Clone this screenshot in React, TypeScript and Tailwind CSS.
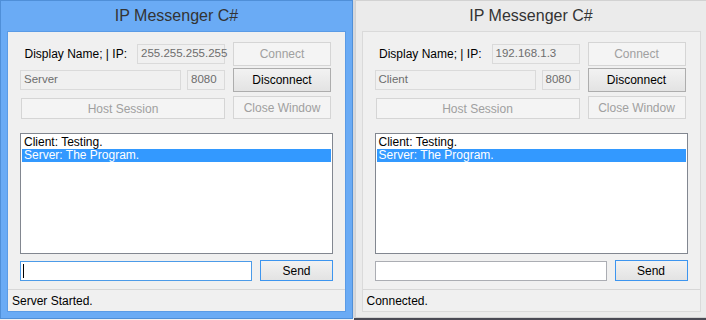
import React from 'react'

// Two WinForms "IP Messenger C#" windows side by side: the host (active) and the client (inactive).

type Props = {
  active?: boolean
  ip: string
  name: string
  status: string
}

const ui = { fontFamily: '"Liberation Sans", Arial, sans-serif' }

function DisabledButton({ label, className }: { label: string; className: string }) {
  return (
    <div
      className={`flex items-center justify-center border border-[#d5d5d5] bg-[#f4f4f4] text-[12px] text-[#a0a0a0] ${className}`}>
      {label}
    </div>
  )
}

function Button({ label, blue, className }: { label: string; blue?: boolean; className: string }) {
  return (
    <div
      className={`flex items-center justify-center border bg-gradient-to-b from-[#f2f2f2] to-[#e3e3e3] text-[12px] text-black ${
        blue ? 'border-[#3d95ef]' : 'border-[#adadad]'
      } ${className}`}>
      {label}
    </div>
  )
}

function ReadOnlyBox({ value, className }: { value: string; className: string }) {
  return (
    <div
      className={`flex items-center border border-[#dadada] bg-[#f0f0f0] px-[3px] text-[11.5px] text-[#6d6d6d] ${className}`}>
      {value}
    </div>
  )
}

function Client({ active, ip, name, status }: Props) {
  return (
    <div className="flex h-[279px] w-[337px] flex-col bg-[#f0f0f0]" style={ui}>
      {/* connection controls */}
      <div className="ml-[12px] mt-[10px] flex h-[24px] w-[311px] items-center justify-between">
        <div className="flex w-[205px] items-center justify-end">
          <span className="text-[12px] text-black">Display Name; | IP:</span>
          <ReadOnlyBox value={ip} className="ml-[10px] h-[20px] w-[88px]" />
        </div>
        <DisabledButton label="Connect" className="h-[24px] w-[98px]" />
      </div>
      <div className="ml-[12px] mt-[2px] flex h-[24px] w-[311px] items-center justify-between">
        <div className="flex w-[205px] items-center justify-between">
          <ReadOnlyBox value={name} className="h-[20px] w-[161px]" />
          <ReadOnlyBox value="8080" className="h-[20px] w-[38px]" />
        </div>
        <Button label="Disconnect" className="h-[24px] w-[98px]" />
      </div>
      <div className="ml-[12px] mt-[4px] flex h-[23px] w-[311px] items-center justify-between">
        <DisabledButton label="Host Session" className="ml-[1px] h-[21px] w-[204px] self-end" />
        <DisabledButton label="Close Window" className="h-[23px] w-[98px]" />
      </div>

      {/* chat log */}
      <div className="ml-[12px] mt-[14px] flex h-[121px] w-[313px] flex-col border border-[#828790] bg-white p-[1px] text-[12px]">
        <div className="h-[14px] px-[2px] leading-[14px] text-black">Client: Testing.</div>
        <div className="h-[13px] bg-[#3399ff] px-[2px] leading-[13px] text-white">Server: The Program.</div>
      </div>

      {/* message entry */}
      <div className="ml-[12px] mt-[6px] flex h-[21px] w-[313px] items-center justify-between">
        <div
          className={`flex h-[20px] w-[232px] items-center bg-white px-[2px] border ${
            active ? 'border-[#4c9be8]' : 'border-[#abadb3]'
          }`}>
          {active && <div className="h-[14px] w-px bg-black" />}
        </div>
        <Button label="Send" blue className="h-[21px] w-[73px]" />
      </div>

      {/* status strip */}
      <div className="mt-[8px] h-px w-full bg-[#d7d7d7]" />
      <div className="flex flex-1 items-center pl-[4px] text-[12px] text-black">{status}</div>
    </div>
  )
}

function Window({ active, ...rest }: Props) {
  return (
    <div
      className={`flex h-full w-full flex-col items-center border ${
        active ? 'border-[#4f8fd8] bg-[#6aabf5]' : 'border-[#d2d2d2] bg-[#ebebeb]'
      }`}>
      <div className="flex h-[30px] w-full items-center justify-center text-[16px] text-[#333]" style={ui}>
        IP Messenger C#
      </div>
      <div className={`border ${active ? 'border-[#5a9be6]' : 'border-[#dadada]'}`}>
        <Client active={active} {...rest} />
      </div>
    </div>
  )
}

export default function App() {
  return (
    <div className="relative h-[320px] w-[706px] overflow-hidden bg-[#f2f2f2]">
      <div className="absolute bottom-0 left-[354px] h-[2px] w-[352px] bg-[#4a4a54]" />
      <div className="absolute left-[352px] top-0 h-[318px] w-[4px] bg-[#d6d8dc]" />
      {/* client window (inactive) */}
      <div className="absolute left-[355px] top-0 h-[318px] w-[352px]">
        <Window ip="192.168.1.3" name="Client" status="Connected." />
      </div>
      {/* host window (active, on top) */}
      <div className="absolute left-0 top-0 h-[319px] w-[353px]">
        <Window active ip="255.255.255.255" name="Server" status="Server Started." />
      </div>
    </div>
  )
}
